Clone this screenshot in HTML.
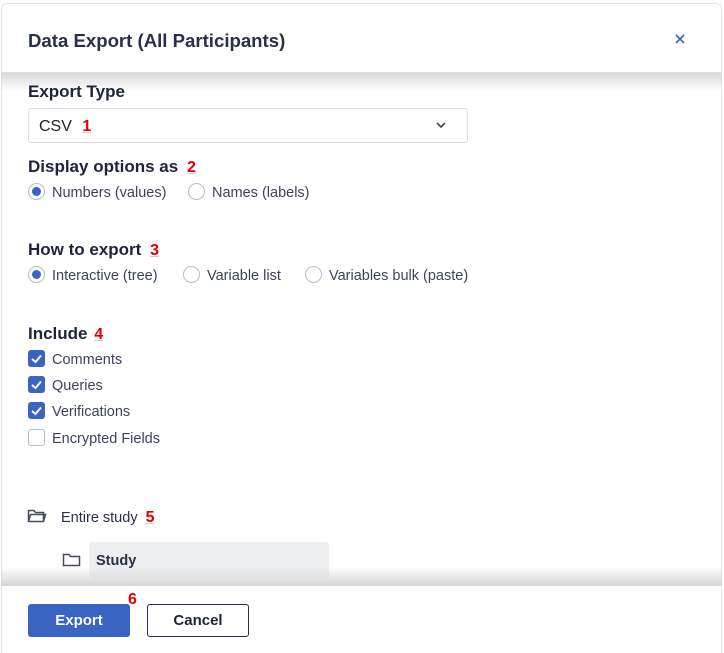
<!DOCTYPE html>
<html style="width:724px;height:653px;overflow:hidden"><head><style>
*{box-sizing:border-box;margin:0;padding:0}
body{width:724px;height:653px;background:#fff;font-family:"Liberation Sans",sans-serif;position:relative;overflow:hidden;color:#2a3146}
.modal{position:absolute;left:1px;top:3px;width:721px;height:650px;border:1px solid #e2e4e8;border-bottom:none;border-radius:6px 6px 0 0;background:#fff}
.a{position:absolute;white-space:nowrap}
.h{font-weight:bold;font-size:17px;color:#1f2537}
.o{font-size:14.5px;color:#3d4459}
.n{color:#e00000;font-weight:bold;font-size:16px;text-decoration:underline;text-decoration-color:#ccc}
.rad{position:absolute;width:17px;height:17px;border:1px solid #b8bcc6;border-radius:50%;background:#fff}
.rad.on::after{content:"";position:absolute;left:3px;top:3px;width:9px;height:9px;border-radius:50%;background:#3a63c2}
.cb{position:absolute;width:17px;height:17px;border:1px solid #b8bcc6;border-radius:3px;background:#fff}
.cb.on{background:#3a63c2;border-color:#3a63c2}
</style></head><body>
<div class="modal"></div>
<div class="a" style="left:28px;top:30px;font-size:18.6px;font-weight:bold;color:#28304a">Data Export (All Participants)</div>
<svg class="a" style="left:675px;top:34px" width="10" height="10"><path d="M1 1L9 9M9 1L1 9" stroke="#3a63c2" stroke-width="1.6"/></svg>
<div class="a" style="left:1px;top:72px;width:721px;height:1px;background:#e0e0e0"></div>
<div class="a" style="left:1px;top:73px;width:721px;height:18px;background:linear-gradient(#d9d9d9,rgba(255,255,255,0))"></div>

<div class="a h" style="left:28px;top:82px">Export Type</div>
<div class="a" style="left:28px;top:108px;width:440px;height:35px;border:1px solid #dadde3;border-radius:3px"></div>
<div class="a" style="left:39px;top:118px;font-size:16px;color:#222">CSV <span class="n" style="margin-left:6px">1</span></div>
<svg class="a" style="left:436px;top:122px" width="10" height="7"><path d="M1 1L5 5L9 1" fill="none" stroke="#333" stroke-width="1.5"/></svg>

<div class="a h" style="left:28px;top:157px">Display options as <span class="n" style="margin-left:4px">2</span></div>
<div class="rad on" style="left:28px;top:183px"></div><div class="a o" style="left:52px;top:185px">Numbers (values)</div>
<div class="rad" style="left:188px;top:183px"></div><div class="a o" style="left:212px;top:185px">Names (labels)</div>

<div class="a h" style="left:28px;top:240px">How to export <span class="n" style="margin-left:4px">3</span></div>
<div class="rad on" style="left:28px;top:266px"></div><div class="a o" style="left:52px;top:268px">Interactive (tree)</div>
<div class="rad" style="left:183px;top:266px"></div><div class="a o" style="left:207px;top:268px">Variable list</div>
<div class="rad" style="left:305px;top:266px"></div><div class="a o" style="left:329px;top:268px">Variables bulk (paste)</div>

<div class="a h" style="left:28px;top:324px">Include <span class="n" style="margin-left:2px">4</span></div>
<div class="cb on" style="left:28px;top:350px"></div><div class="a o" style="left:52px;top:352px">Comments</div>
<div class="cb on" style="left:28px;top:376px"></div><div class="a o" style="left:52px;top:378px">Queries</div>
<div class="cb on" style="left:28px;top:402px"></div><div class="a o" style="left:52px;top:404px">Verifications</div>
<div class="cb" style="left:28px;top:429px"></div><div class="a o" style="left:52px;top:431px">Encrypted Fields</div>
<svg class="a" style="left:28px;top:350px" width="17" height="80"><g fill="none" stroke="#fff" stroke-width="2"><path d="M4 9L7.5 12L13 5.5"/><path d="M4 35L7.5 38L13 31.5"/><path d="M4 61L7.5 64L13 57.5"/></g></svg>

<svg class="a" style="left:27px;top:508px" width="20" height="16"><path d="M1.5 2.5H7L8.5 4.5H16.5V13.5H1.5Z M1.5 13.5L3.5 6.5H18.5L16.5 13.5" fill="none" stroke="#444b5c" stroke-width="1.5"/></svg>
<div class="a o" style="left:61px;top:509px;color:#2a3146">Entire study <span class="n" style="margin-left:4px">5</span></div>
<svg class="a" style="left:62px;top:552px" width="20" height="16"><path d="M1.5 2.5H7L8.5 4.5H17.5V13.5H1.5Z" fill="none" stroke="#444b5c" stroke-width="1.5"/></svg>
<div class="a" style="left:89px;top:542px;width:240px;height:36px;background:#eceef0;border-radius:3px"></div>
<div class="a" style="left:96px;top:553px;font-size:14.5px;font-weight:bold;color:#2a3146">Study</div>

<div class="a" style="left:1px;top:567px;width:721px;height:18px;background:linear-gradient(rgba(255,255,255,0),#d6d6d6)"></div>
<div class="a" style="left:1px;top:585px;width:721px;height:68px;background:#fff;border-top:1px solid #d8d8d8;border-left:1px solid #e2e4e8;border-right:1px solid #e2e4e8"></div>
<div class="a" style="left:128px;top:591px;color:#e00000;font-weight:bold;font-size:16px">6</div>
<div class="a" style="left:28px;top:604px;width:102px;height:33px;background:#3a63c2;border-radius:3px;color:#fff;font-weight:bold;font-size:15px;text-align:center;line-height:33px">Export</div>
<div class="a" style="left:147px;top:604px;width:102px;height:33px;border:1px solid #2a3146;border-radius:3px;color:#1f2537;font-weight:bold;font-size:15px;text-align:center;line-height:31px">Cancel</div>
</body></html>
